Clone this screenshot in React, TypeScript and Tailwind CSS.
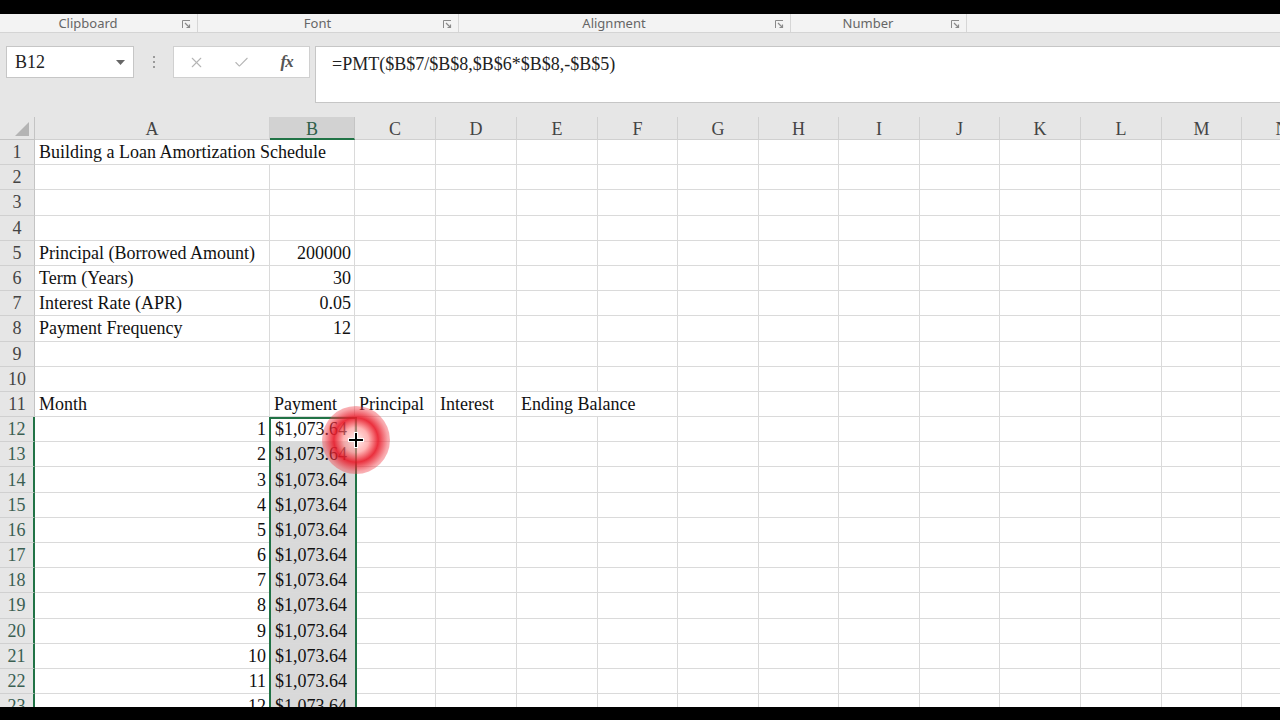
import { X, Check } from 'lucide-react';

const COLS = ['A', 'B', 'C', 'D', 'E', 'F', 'G', 'H', 'I', 'J', 'K', 'L', 'M', 'N'];
const GRID =
  'grid grid-cols-[35px_235px_85px_81px_81px_81px_80px_81px_80px_81px_80px_81px_81px_80px_81px] w-max';

type Cell = { text: string; right?: boolean; overflow?: boolean; money?: boolean };

const cells: Record<string, Cell> = {
  A1: { text: 'Building a Loan Amortization Schedule', overflow: true },
  A5: { text: 'Principal (Borrowed Amount)' },
  B5: { text: '200000', right: true },
  A6: { text: 'Term (Years)' },
  B6: { text: '30', right: true },
  A7: { text: 'Interest Rate (APR)' },
  B7: { text: '0.05', right: true },
  A8: { text: 'Payment Frequency' },
  B8: { text: '12', right: true },
  A11: { text: 'Month' },
  B11: { text: 'Payment' },
  C11: { text: 'Principal' },
  D11: { text: 'Interest' },
  E11: { text: 'Ending Balance', overflow: true },
};
for (let r = 12; r <= 23; r++) {
  cells[`A${r}`] = { text: String(r - 11), right: true };
  cells[`B${r}`] = { text: '$1,073.64', right: true, money: true };
}

function Launcher() {
  return (
    <svg width="9" height="9" viewBox="0 0 9 9" className="text-[#8a8a8a]">
      <path d="M0.5 8V0.5H8" fill="none" stroke="currentColor" strokeWidth="1" />
      <path d="M3 3L7.5 7.5M7.5 4.5V7.5H4.5" fill="none" stroke="currentColor" strokeWidth="1.2" />
    </svg>
  );
}

function Group({ label, width }: { label: string; width: string }) {
  return (
    <div className={`flex items-center h-full border-r border-[#d6d6d6] ${width}`}>
      <div className="flex-1 text-center">{label}</div>
      <div className="w-[21px] flex justify-center items-center pt-[2px]">
        <Launcher />
      </div>
    </div>
  );
}

export default function App() {
  const rows = Array.from({ length: 23 }, (_, i) => i + 1);

  return (
    <div className="relative w-[1280px] h-[720px] overflow-hidden flex flex-col bg-white font-['Liberation_Serif',serif]">
      {/* top black strip */}
      <div className="h-[14px] bg-black shrink-0" />

      {/* ribbon group labels */}
      <div className="h-[18px] shrink-0 flex bg-[#f3f3f3] text-[13px] text-[#666] font-['Noto_Sans',sans-serif] leading-none">
        <Group label="Clipboard" width="w-[198px]" />
        <Group label="Font" width="w-[261px]" />
        <Group label="Alignment" width="w-[332px]" />
        <Group label="Number" width="w-[176px]" />
      </div>

      {/* formula bar */}
      <div className="h-[85px] shrink-0 bg-[#e6e6e6] border-t border-[#d4d4d4] flex items-start pt-[13px] pl-[6px]">
        <div className="w-[128px] h-[32px] bg-white border border-[#c6c6c6] flex items-center pl-[8px] pr-[8px]">
          <span className="flex-1 text-[18px] text-[#222]">B12</span>
          <svg width="9" height="5" viewBox="0 0 9 5">
            <path d="M0 0H9L4.5 5Z" fill="#666" />
          </svg>
        </div>
        <div className="w-[39px] h-[32px] flex flex-col items-center justify-center gap-[3px]">
          <span className="w-[2px] h-[2px] bg-[#9a9a9a]" />
          <span className="w-[2px] h-[2px] bg-[#9a9a9a]" />
          <span className="w-[2px] h-[2px] bg-[#9a9a9a]" />
        </div>
        <div className="w-[137px] h-[32px] bg-white border border-[#d0d0d0] flex items-center">
          <div className="w-[46px] flex justify-center">
            <X size={17} strokeWidth={1.5} className="text-[#b5b5b5]" />
          </div>
          <div className="w-[45px] flex justify-center">
            <Check size={17} strokeWidth={1.5} className="text-[#b5b5b5]" />
          </div>
          <div className="w-[45px] flex justify-center italic text-[17px] text-[#555] font-bold tracking-[-1px]">
            fx
          </div>
        </div>
        <div className="ml-[5px] flex-1 h-[57px] bg-white border border-[#c6c6c6] border-r-0 pl-[16px] pt-[4px] text-[18px] text-[#222]">
          =PMT($B$7/$B$8,$B$6*$B$8,-$B$5)
        </div>
      </div>

      {/* sheet */}
      <div className="flex-1 overflow-hidden bg-white relative">
        {/* column headers */}
        <div className={`${GRID} h-[23px] bg-[#e6e6e6] text-[18px] text-[#444] leading-none`}>
          <div className="border-r border-b border-[#c4c4c4] flex items-end justify-end pr-[5px] pb-[3px]">
            <svg width="14" height="14" viewBox="0 0 14 14">
              <path d="M14 0V14H0Z" fill="#b4b4b4" />
            </svg>
          </div>
          {COLS.map((c) => (
            <div
              key={c}
              className={
                c === 'B'
                  ? 'bg-[#d2d2d2] border-r border-[#c4c4c4] border-b-2 border-b-[#217346] flex items-center justify-center pt-[2px] text-[#2e5e48]'
                  : 'border-r border-b border-[#d0d0d0] flex items-center justify-center pt-[1px]'
              }
            >
              {c}
            </div>
          ))}
        </div>

        {/* rows */}
        {rows.map((r) => {
          const sel = r >= 12;
          return (
            <div key={r} className={`${GRID} h-[25.2px] text-[18px] leading-none`}>
              <div
                className={`bg-[#e6e6e6] border-b border-[#d0d0d0] flex items-center justify-center ${
                  sel ? 'border-r-2 border-r-[#217346] text-[#3a5f52] bg-[#dedede]' : 'border-r border-r-[#c4c4c4] text-[#444]'
                }`}
              >
                {r}
              </div>
              {COLS.map((c) => {
                const cell = cells[`${c}${r}`];
                const selB = c === 'B' && r >= 13;
                return (
                  <div
                    key={c}
                    className={`relative flex items-center border-b border-[#dadada] whitespace-nowrap ${
                      cell?.overflow ? '' : 'border-r border-r-[#dadada]'
                    } ${selB ? 'bg-[#d9d9d9]' : ''} ${cell?.right ? 'justify-end' : ''} ${
                      cell?.money ? 'pr-[7px] pl-[2px]' : 'pl-[4px] pr-[3px]'
                    }`}
                  >
                    {cell && <span className="relative z-10 text-[#111]">{cell.text}</span>}
                  </div>
                );
              })}
            </div>
          );
        })}

        {/* selection outline B12:B23 */}
        <div className="absolute left-[269px] top-[300px] w-[88px] h-[320px] border-2 border-[#217346] z-20 pointer-events-none" />
      </div>

      {/* bottom black strip */}
      <div className="h-[13px] bg-black shrink-0" />

      {/* click highlight + cursor */}
      <div className="absolute left-[322px] top-[406px] w-[68px] h-[68px] rounded-full z-30 bg-[radial-gradient(circle,rgba(255,225,225,0.55)_0%,rgba(255,130,130,0.6)_26%,rgba(232,25,40,0.9)_46%,rgba(240,60,70,0.45)_66%,rgba(240,60,70,0)_100%)] flex items-center justify-center">
        <svg width="18" height="18" viewBox="0 0 18 18">
          <path d="M9 1V17M1 9H17" stroke="white" strokeWidth="4" />
          <path d="M9 2V16M2 9H16" stroke="black" strokeWidth="2" />
        </svg>
      </div>
    </div>
  );
}
